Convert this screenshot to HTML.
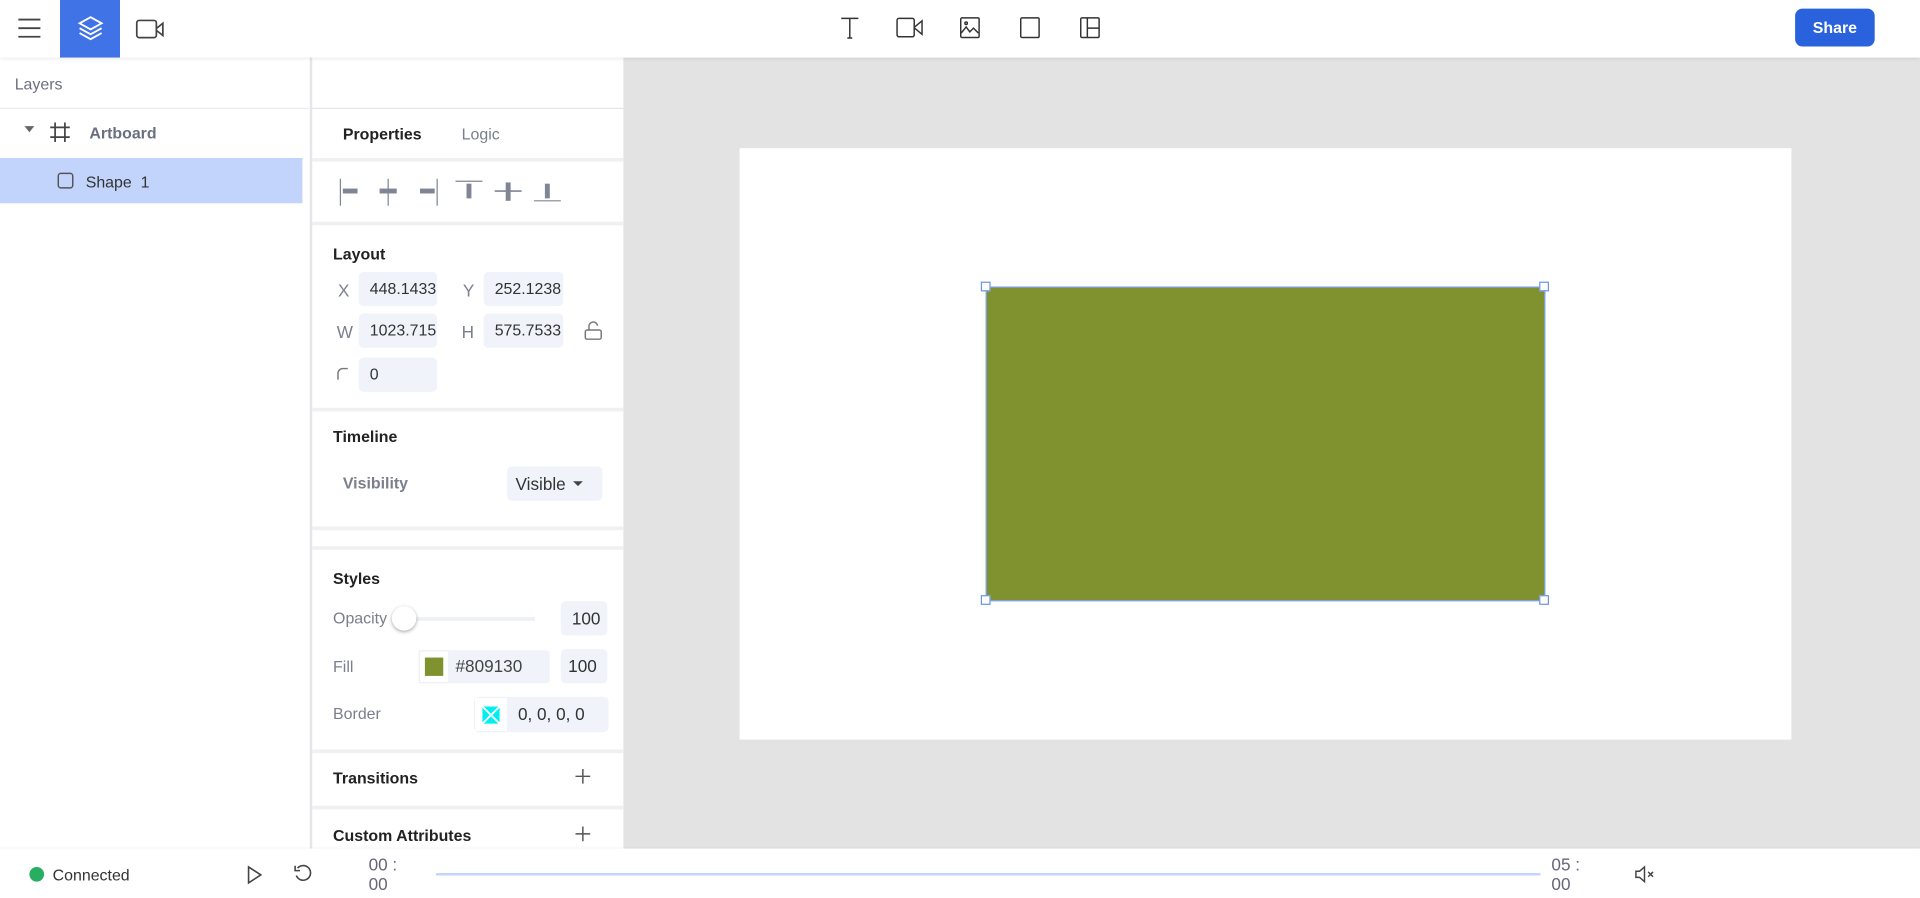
<!DOCTYPE html>
<html><head><meta charset="utf-8"><style>
*{box-sizing:border-box;margin:0;padding:0}
html,body{width:1920px;height:898px;overflow:hidden;background:#fff}
#w{position:absolute;left:0;top:0;width:1568px;height:733px;transform:scale(1.22449);transform-origin:0 0;font-family:"Liberation Sans",sans-serif;color:#333}
.a{position:absolute}
.lbl{font-size:13px;color:#7a7f8c}
.h{font-size:13px;font-weight:bold;color:#222}
.inp{position:absolute;background:#f0f3fa;border-radius:4px;font-size:13px;color:#333;padding-left:9px;line-height:28px;height:28px;overflow:hidden;white-space:nowrap}
.div{position:absolute;left:255px;width:254px;height:3px;background:#f0f0f2}
svg{position:absolute;overflow:visible}
</style></head><body><div id="w">
<!-- top bar -->
<div class="a" style="left:0;top:0;width:1568px;height:47px;background:#fff;box-shadow:0 1px 3px rgba(0,0,0,.08);z-index:3"></div>
<div class="a" style="z-index:4;left:0;top:0;width:1568px;height:47px">
<svg style="left:15px;top:15px" width="19" height="16"><path d="M0 1H18M0 8H18M0 15H18" stroke="#444" stroke-width="1.5"/></svg>
<div class="a" style="left:49px;top:0;width:49px;height:47px;background:#3f73e6"></div>
<svg style="left:64px;top:13px" width="20" height="22" fill="none" stroke="#fff" stroke-width="1.5"><path d="M10 1L19 6L10 11L1 6Z"/><path d="M1 10L10 15L19 10"/><path d="M1 14L10 19L19 14"/></svg>
<svg style="left:111px;top:16px" width="24" height="16" fill="none" stroke="#444" stroke-width="1.4"><rect x="0.7" y="0.7" width="16" height="14" rx="2"/><path d="M17 7L22 3V13L17 9"/></svg>
<svg style="left:686px;top:14px" width="16" height="18" fill="none" stroke="#333" stroke-width="1.2"><path d="M1 1H15M8 1V17M6 17H10"/></svg>
<svg style="left:732px;top:14px" width="22" height="18" fill="none" stroke="#333" stroke-width="1.2"><rect x="0.6" y="1" width="14" height="15" rx="1.5"/><path d="M15 8L21 3V14L15 9"/></svg>
<svg style="left:784px;top:14px" width="16" height="18" fill="none" stroke="#333" stroke-width="1.2"><rect x="0.6" y="0.6" width="15" height="16" rx="1"/><path d="M1 13L5 8L8 12L11 9L15 13"/><circle cx="5" cy="5" r="1"/></svg>
<svg style="left:833px;top:14px" width="17" height="18" fill="none" stroke="#333" stroke-width="1.2"><rect x="0.6" y="0.6" width="15" height="16" rx="1"/></svg>
<svg style="left:882px;top:14px" width="17" height="18" fill="none" stroke="#333" stroke-width="1.2"><rect x="0.6" y="0.6" width="15" height="16" rx="1"/><path d="M6 1V17M6 9H16"/></svg>
<div class="a" style="left:1466px;top:7px;width:65px;height:31px;background:#2a62de;border-radius:6px;color:#fff;font-weight:bold;font-size:13px;text-align:center;line-height:31px">Share</div>
</div>
<!-- canvas -->
<div class="a" style="left:509px;top:47px;width:1059px;height:646px;background:#e3e3e3"></div>
<div class="a" style="left:604px;top:121px;width:859px;height:483px;background:#fff"></div>
<div class="a" style="left:805px;top:234px;width:457px;height:257px;background:#809130;border:1px solid #7aa0e8"></div>
<div class="a" style="left:801px;top:230px;width:8px;height:8px;background:#fff;border:1px solid #6d95e6"></div>
<div class="a" style="left:1257px;top:230px;width:8px;height:8px;background:#fff;border:1px solid #6d95e6"></div>
<div class="a" style="left:801px;top:486px;width:8px;height:8px;background:#fff;border:1px solid #6d95e6"></div>
<div class="a" style="left:1257px;top:486px;width:8px;height:8px;background:#fff;border:1px solid #6d95e6"></div>
<!-- layers panel -->
<div class="a" style="left:0;top:47px;width:254px;height:646px;background:#fff;border-right:1px solid #e6e6ea"></div>
<div class="a lbl" style="left:12px;top:61px;font-size:13px;color:#6b7080">Layers</div>
<div class="a" style="left:0;top:88px;width:254px;height:1px;background:#eceef2"></div>
<svg style="left:20px;top:103px" width="8" height="5"><path d="M0 0H8L4 5Z" fill="#666"/></svg>
<svg style="left:41px;top:100px" width="16" height="16" fill="none" stroke="#444" stroke-width="1.4"><path d="M4 0V16M12 0V16M0 4H16M0 12H16"/></svg>
<div class="a" style="left:73px;top:101px;font-size:13px;font-weight:bold;color:#6b7080">Artboard</div>
<div class="a" style="left:0;top:129px;width:247px;height:37px;background:#c2d4fb"></div>
<svg style="left:47px;top:141px" width="13" height="13" fill="none" stroke="#555" stroke-width="1.2"><rect x="0.6" y="0.6" width="11.8" height="11.8" rx="2"/></svg>
<div class="a" style="left:70px;top:141px;font-size:13px;color:#333">Shape&nbsp; 1</div>
<!-- properties panel -->
<div class="a" style="left:254px;top:47px;width:255px;height:646px;background:#fff;border-left:1px solid #e6e6ea"></div>
<div class="a" style="left:255px;top:88px;width:254px;height:1px;background:#e6e6ea"></div>
<div class="a h" style="left:280px;top:102px">Properties</div>
<div class="a" style="left:377px;top:102px;font-size:13px;color:#7a7f8c">Logic</div>
<div class="div" style="top:129px"></div>
<svg style="left:277px;top:146px" width="182" height="22"><g fill="#7f8594" stroke="#7f8594"><path d="M1 0V22" stroke-width="1" fill="none"/><rect x="3" y="8" width="12" height="4" stroke="none"/>
<path d="M40 0V22" stroke-width="1"/><rect x="33" y="8" width="14" height="4" stroke="none"/>
<path d="M80 0V22" stroke-width="1"/><rect x="66" y="8" width="12" height="4" stroke="none"/>
<path d="M95 2H117" stroke-width="1"/><rect x="104" y="4" width="4" height="12" stroke="none"/>
<path d="M127 10H149" stroke-width="1.3"/><rect x="136" y="3" width="4" height="15" stroke="none"/>
<path d="M159 18H181" stroke-width="1"/><rect x="168" y="4" width="4" height="12" stroke="none"/></g></svg>
<div class="div" style="top:181px"></div>
<div class="a h" style="left:272px;top:200px">Layout</div>
<div class="a lbl" style="left:276px;top:229px;font-size:14px">X</div><div class="inp" style="left:293px;top:222px;width:64px">448.1433</div>
<div class="a lbl" style="left:378px;top:229px;font-size:14px">Y</div><div class="inp" style="left:395px;top:222px;width:65px">252.1238</div>
<div class="a lbl" style="left:275px;top:263px;font-size:14px">W</div><div class="inp" style="left:293px;top:256px;width:64px">1023.715</div>
<div class="a lbl" style="left:377px;top:263px;font-size:14px">H</div><div class="inp" style="left:395px;top:256px;width:65px">575.7533</div>
<svg style="left:477px;top:263px" width="15" height="15" fill="none" stroke="#777" stroke-width="1.2"><rect x="1" y="6.5" width="13" height="7.5" rx="1.5"/><path d="M4 6.5V4A3.5 3.5 0 0 1 11 3"/></svg>
<svg style="left:275px;top:300px" width="10" height="10" fill="none" stroke="#777" stroke-width="1.2"><path d="M1 10V5A4 4 0 0 1 5 1H9"/></svg>
<div class="inp" style="left:293px;top:292px;width:64px">0</div>
<div class="div" style="top:333px"></div>
<div class="a h" style="left:272px;top:349px">Timeline</div>
<div class="a" style="left:280px;top:387px;font-size:13px;font-weight:bold;color:#7a7f8c">Visibility</div>
<div class="inp" style="left:414px;top:381px;width:78px;padding-left:7px;font-size:14px">Visible</div>
<svg style="left:468px;top:393px" width="8" height="4"><path d="M0 0H8L4 4Z" fill="#444"/></svg>
<div class="div" style="top:430px"></div>
<div class="div" style="top:446px"></div>
<div class="a h" style="left:272px;top:465px">Styles</div>
<div class="a lbl" style="left:272px;top:497px">Opacity</div>
<div class="a" style="left:330px;top:504px;width:107px;height:3px;background:#eef0f7"></div>
<div class="a" style="left:320px;top:495px;width:20px;height:20px;border-radius:50%;background:#fff;box-shadow:0 1px 3px rgba(0,0,0,.35)"></div>
<div class="inp" style="left:458px;top:491px;width:38px;padding-left:9px;font-size:14px">100</div>
<div class="a lbl" style="left:272px;top:537px">Fill</div>
<div class="a" style="left:342px;top:531px;width:107px;height:27px;background:#f0f3fa;border-radius:3px"></div>
<div class="a" style="left:342px;top:531px;width:25px;height:27px;background:#fff;border:1px solid #eef0f5"></div>
<div class="a" style="left:347px;top:537px;width:15px;height:15px;background:#809130"></div>
<div class="a" style="left:372px;top:536px;font-size:14px;color:#444">#809130</div>
<div class="inp" style="left:458px;top:530px;width:38px;padding-left:6px;font-size:14px">100</div>
<div class="a lbl" style="left:272px;top:575px">Border</div>
<div class="a" style="left:387px;top:569px;width:110px;height:29px;background:#f0f3fa;border-radius:4px"></div>
<div class="a" style="left:388px;top:570px;width:26px;height:27px;background:#fff"></div>
<svg style="left:394px;top:577px" width="14" height="14"><rect width="14" height="14" fill="#00f0f0"/><path d="M0 0L14 14M14 0L0 14" stroke="#fff" stroke-width="1.5"/></svg>
<div class="a" style="left:423px;top:575px;font-size:14px;color:#333">0, 0, 0, 0</div>
<div class="div" style="top:612px"></div>
<div class="a h" style="left:272px;top:628px">Transitions</div>
<svg style="left:470px;top:628px" width="12" height="12"><path d="M6 0V12M0 6H12" stroke="#555" stroke-width="1.2"/></svg>
<div class="div" style="top:658px"></div>
<div class="a h" style="left:272px;top:675px">Custom Attributes</div>
<svg style="left:470px;top:675px" width="12" height="12"><path d="M6 0V12M0 6H12" stroke="#555" stroke-width="1.2"/></svg>
<!-- bottom bar -->
<div class="a" style="left:0;top:693px;width:1568px;height:40px;background:#fff;box-shadow:0 -1px 2px rgba(0,0,0,.05)"></div>
<div class="a" style="left:24px;top:708px;width:12px;height:12px;border-radius:50%;background:#27ae60"></div>
<div class="a" style="left:43px;top:707px;font-size:13px;color:#333">Connected</div>
<svg style="left:202px;top:707px" width="12" height="15" fill="none" stroke="#444" stroke-width="1.3"><path d="M1 1L11 7.5L1 14Z"/></svg>
<svg style="left:240px;top:706px" width="15" height="15" fill="none" stroke="#444" stroke-width="1.3"><path d="M3 3A6 6 0 1 1 2 9"/><path d="M1 1V5H5"/></svg>
<div class="a" style="left:301px;top:698px;font-size:14px;color:#667;line-height:16px">00 :<br>00</div>
<div class="a" style="left:356px;top:713px;width:902px;height:2px;background:#c2d4fb"></div>
<div class="a" style="left:1267px;top:698px;font-size:14px;color:#667;line-height:16px">05 :<br>00</div>
<svg style="left:1335px;top:707px" width="17" height="14" fill="none" stroke="#444" stroke-width="1.2"><path d="M1 4.5H4L8 1V13L4 9.5H1Z"/><path d="M11 5L15 9M15 5L11 9"/></svg>
</div></body></html>
